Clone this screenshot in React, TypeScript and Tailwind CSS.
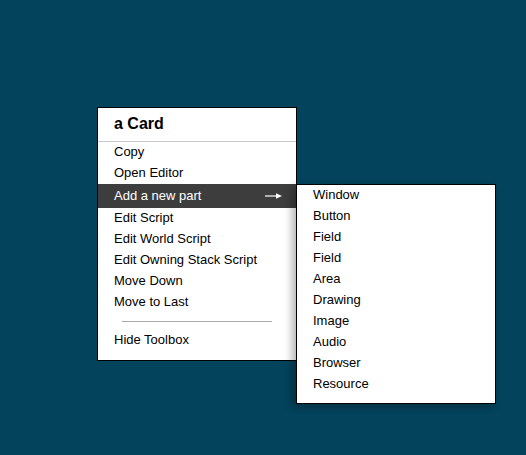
import React from 'react';

const cardItems = ['Copy', 'Open Editor'];
const scriptItems = ['Edit Script', 'Edit World Script', 'Edit Owning Stack Script', 'Move Down', 'Move to Last'];
const partTypes = ['Window', 'Button', 'Field', 'Field', 'Area', 'Drawing', 'Image', 'Audio', 'Browser', 'Resource'];

function MenuItem({ label }: { label: string }) {
  return <div className="h-[21px] pl-4 leading-[19px] text-black">{label}</div>;
}

function RightArrow() {
  return (
    <svg width="17" height="8" viewBox="0 0 17 8" className="block">
      <line x1="0" y1="4" x2="13" y2="4" stroke="white" strokeWidth="1.2" />
      <polygon points="11,1.2 17,4 11,6.8" fill="white" />
    </svg>
  );
}

export default function App() {
  return (
    <div
      className="h-[455px] w-full bg-[#03435c] pl-[97px] pt-[107px] text-[13px]"
      style={{ fontFamily: '"Liberation Sans", Arial, sans-serif' }}
    >
      <div className="relative w-[200px] border border-black bg-white pb-[9px]">
        <div className="h-[33px] pl-4 text-[16px] font-bold leading-[31px] text-black">a Card</div>
        <div className="h-px bg-[#c8c8c8]" />
        {cardItems.map((label) => (
          <MenuItem key={label} label={label} />
        ))}

        {/* highlighted entry with its submenu */}
        <div className="relative">
          <div className="flex h-[24px] items-center justify-between bg-[#3d3d3d] pl-4 pr-[14px] text-white">
            <span className="-mt-px">Add a new part</span>
            <RightArrow />
          </div>
          <div className="absolute left-[198px] top-0 z-10 w-[200px] border border-black bg-white pb-[8px] shadow-[-4px_3px_8px_rgba(0,0,0,0.3)]">
            {partTypes.map((label, i) => (
              <MenuItem key={i} label={label} />
            ))}
          </div>
        </div>

        {scriptItems.map((label) => (
          <MenuItem key={label} label={label} />
        ))}
        <div className="flex h-[17px] items-center justify-center">
          <div className="h-px w-[150px] bg-[#aaaaaa]" />
        </div>
        <MenuItem label="Hide Toolbox" />
      </div>
    </div>
  );
}
